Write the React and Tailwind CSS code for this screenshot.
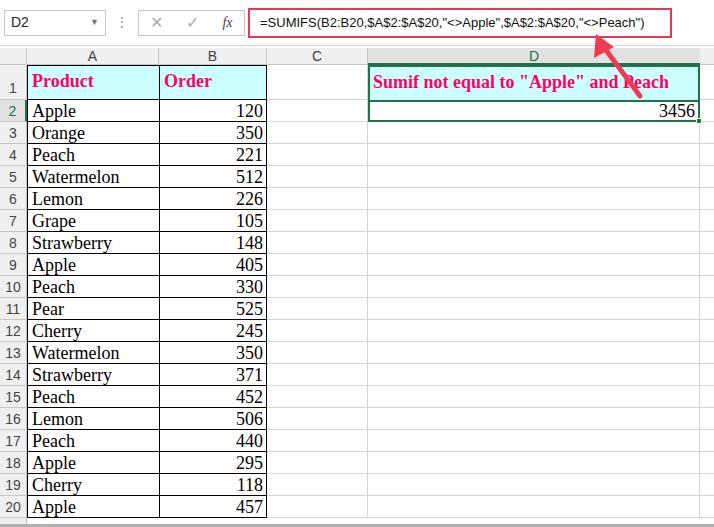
import React from 'react';

const rows = [
  ['Apple', 120], ['Orange', 350], ['Peach', 221], ['Watermelon', 512], ['Lemon', 226],
  ['Grape', 105], ['Strawberry', 148], ['Apple', 405], ['Peach', 330], ['Pear', 525],
  ['Cherry', 245], ['Watermelon', 350], ['Strawberry', 371], ['Peach', 452], ['Lemon', 506],
  ['Peach', 440], ['Apple', 295], ['Cherry', 118], ['Apple', 457],
];

const serif = { fontFamily: '"Liberation Serif", serif' };

const App = () => {
  return (
    <div className="relative w-[714px] h-[527px] bg-white overflow-hidden" style={{ fontFamily: '"Liberation Sans", sans-serif' }}>
      {/* formula bar */}
      <div className="h-[46px] bg-white flex items-center pl-[4px] border-b border-[#d4d4d4]">
        <div className="w-[102px] h-[26px] border border-[#c6c6c6] flex items-center justify-between px-[6px] text-[14px] text-[#222]">
          <span>D2</span>
          <span className="text-[#777] text-[9px]">▼</span>
        </div>
        <div className="w-[32px] flex justify-center text-[#999] text-[14px]">⋮</div>
        <div className="w-[107px] h-[26px] border border-[#c6c6c6] flex items-center justify-around text-[#aaa] text-[16px]">
          <span>✕</span><span>✓</span><span className="text-[#444] italic text-[14px]" style={serif}>fx</span>
        </div>
        <div className="ml-[3px] w-[424px] h-[30px] border-[2px] border-[#e33b55] flex items-center pl-[10px] text-[13px] text-[#111] whitespace-nowrap">
          =SUMIFS(B2:B20,$A$2:$A$20,"&lt;&gt;Apple",$A$2:$A$20,"&lt;&gt;Peach")
        </div>
      </div>

      {/* grid */}
      <div className="mt-[2px] grid grid-cols-[27px_132px_108px_101px_332px_14px]">
        <div className="h-[17px] bg-[#f0f0f0] border-r border-b border-[#c6c6c6]" />
        {['A', 'B', 'C'].map((c) => (
          <div key={c} className="h-[17px] bg-[#f0f0f0] border-r border-b border-[#c6c6c6] text-center text-[14px] leading-[17px] text-[#444]">{c}</div>
        ))}
        <div className="h-[17px] bg-[#e1e1e1] border-b-2 border-[#217346] text-center text-[14px] leading-[17px] text-[#217346]">D</div>
        <div className="h-[17px] bg-[#f0f0f0] border-b border-[#c6c6c6]" />

        {/* row 1 */}
        <div className="h-[35px] bg-[#f0f0f0] border-r border-b border-[#c6c6c6] text-center text-[14px] text-[#444] flex items-end justify-center">1</div>
        <div className="h-[35px] bg-[#ccffff] border border-black border-r-0 text-[#ff0066] font-bold text-[18px] flex items-end pl-[4px] pb-[4px]" style={serif}>Product</div>
        <div className="h-[35px] bg-[#ccffff] border border-black text-[#ff0066] font-bold text-[18px] flex items-end pl-[4px] pb-[4px]" style={serif}>Order</div>
        <div className="h-[35px] border-r border-b border-[#d4d4d4]" />
        <div className="h-[35px] bg-[#ccffff] border-2 border-[#217346] border-b-0 text-[#ff0066] font-bold text-[18px] flex items-end pl-[3px] pb-[4px] whitespace-nowrap" style={serif}>Sumif not equal to "Apple" and Peach</div>
        <div className="h-[35px] border-b border-[#d4d4d4]" />

        {rows.map(([p, o], i) => (
          <React.Fragment key={i}>
            <div className={`h-[22px] border-r border-b border-[#c6c6c6] text-center text-[14px] leading-[22px] ${i === 0 ? 'bg-[#e1e1e1] text-[#217346] border-r-2 border-r-[#217346]' : 'bg-[#f0f0f0] text-[#444]'}`}>{i + 2}</div>
            <div className="h-[22px] border-l border-b border-black pl-[4px] text-[18px] leading-[22px]" style={serif}>{p}</div>
            <div className="h-[22px] border-x border-b border-black pr-[3px] text-right text-[18px] leading-[22px]" style={serif}>{o}</div>
            <div className="h-[22px] border-r border-b border-[#d4d4d4]" />
            {i === 0 ? (
              <div className="relative h-[22px] border-2 border-[#217346] pr-[3px] text-right text-[18px] leading-[18px]" style={serif}>
                3456
                <div className="absolute right-[-4px] bottom-[-4px] w-[6px] h-[6px] bg-[#217346] border border-white" />
              </div>
            ) : (
              <div className="h-[22px] border-r border-b border-[#d4d4d4]" />
            )}
            <div className="h-[22px] border-b border-[#d4d4d4]" />
          </React.Fragment>
        ))}
        <div className="h-[6px] bg-[#f0f0f0] border-r border-[#c6c6c6]" />
        <div className="col-span-5 h-[6px]" />
      </div>
      <div className="absolute left-0 right-0 bottom-0 h-[3px] bg-[#b0b0b0]" />

      {/* arrow */}
      <svg className="absolute left-0 top-0 pointer-events-none" width="714" height="527">
        <line x1="640" y1="96" x2="603" y2="46" stroke="#ee3c55" strokeWidth="5" strokeLinecap="round" />
        <polygon points="596,34 594,58 614,47" fill="#ee3c55" />
      </svg>
    </div>
  );
};

export default App;
